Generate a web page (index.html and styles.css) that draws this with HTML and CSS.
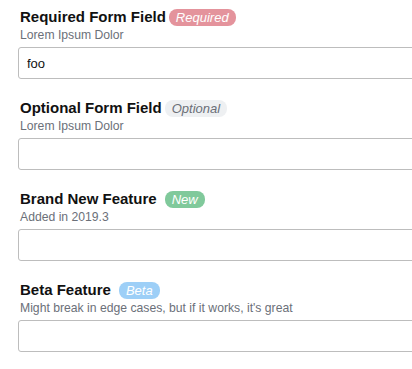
FILE: index.html
```html
<!DOCTYPE html>
<html lang="en">
<head>
  <meta charset="UTF-8" />
  <meta name="viewport" content="width=device-width, initial-scale=1.0" />
  <title>Form Fields</title>
  <link rel="stylesheet" href="styles.css">
</head>
<body>
  <form class="form">
    <div class="field">
      <div class="field-head">
        <label class="field-title" for="f1">Required Form Field</label>
        <span class="badge badge-required">Required</span>
      </div>
      <div class="field-help">Lorem Ipsum Dolor</div>
      <input class="field-input" id="f1" type="text" value="foo" />
    </div>

    <div class="field">
      <div class="field-head">
        <label class="field-title" for="f2">Optional Form Field</label>
        <span class="badge badge-optional">Optional</span>
      </div>
      <div class="field-help">Lorem Ipsum Dolor</div>
      <input class="field-input" id="f2" type="text" />
    </div>

    <!-- feature flags -->
    <div class="field">
      <div class="field-head">
        <label class="field-title" for="f3">Brand New Feature</label>
        <span class="badge badge-feature badge-new">New</span>
      </div>
      <div class="field-help">Added in 2019.3</div>
      <input class="field-input" id="f3" type="text" />
    </div>

    <div class="field">
      <div class="field-head">
        <label class="field-title" for="f4">Beta Feature</label>
        <span class="badge badge-feature badge-beta">Beta</span>
      </div>
      <div class="field-help">Might break in edge cases, but if it works, it's great</div>
      <input class="field-input" id="f4" type="text" />
    </div>
  </form>
</body>
</html>
```

FILE: styles.css
```css
body {
  margin: 0;
  background: #fff;
  color: #111;
  font-family: 'Liberation Sans', Arial, sans-serif;
}
.form {
  padding: 8px 0 0 18px;
  overflow: hidden;
}
.field {
  margin-bottom: 20px;
}
.field-head {
  display: flex;
  align-items: center;
  gap: 3px;
  height: 18px;
}
.field-title {
  font-size: 15px;
  font-weight: bold;
  line-height: 18px;
  padding-left: 2px;
}
.badge {
  font-size: 13px;
  font-style: italic;
  line-height: 17px;
  padding: 0 7px;
  border-radius: 8px;
  color: #fff;
}
.badge-feature {
  margin-left: 5px;
}
.badge-required {
  background: #e4939c;
}
.badge-optional {
  background: #eef0f2;
  color: #6b6f77;
}
.badge-new {
  background: #80c99b;
}
.badge-beta {
  background: #9dcff7;
}
.field-help {
  margin-top: 2px;
  padding-left: 2px;
  font-size: 12.2px;
  line-height: 15px;
  color: #6b7079;
}
.field-input {
  display: block;
  box-sizing: border-box;
  width: 420px;
  height: 32px;
  margin-top: 4px;
  padding: 0 8px;
  border: 1px solid #bdbdbd;
  border-radius: 3px;
  font-family: 'Liberation Sans', Arial, sans-serif;
  font-size: 13px;
  color: #111;
}
```
